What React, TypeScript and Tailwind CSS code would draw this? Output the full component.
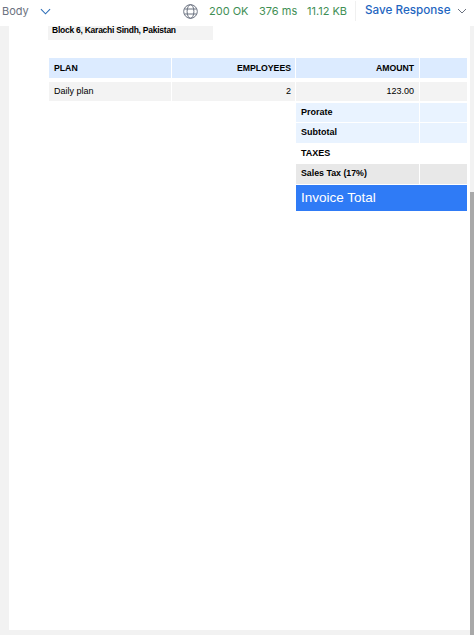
const font = "font-['Liberation_Sans',Arial,sans-serif]";

export default function App() {
  return (
    <div className="w-[474px] h-[635px] overflow-hidden bg-white flex flex-col relative">
      {/* Top bar */}
      <div className="h-[26px] shrink-0 flex items-center pb-[4px] bg-white font-['Inter',sans-serif] text-[11px] whitespace-nowrap">
        <span className="ml-[2px] w-[26px] text-[#6b7280]">Body</span>
        <svg className="ml-[12px] shrink-0" width="11" height="11" viewBox="0 0 12 12" fill="none" stroke="#2f6fb8" strokeWidth="1.2">
          <path d="M1 3.5l5 5 5-5" />
        </svg>
        <svg className="ml-[132px] shrink-0" width="15" height="15" viewBox="0 0 15 15" fill="none" stroke="#6b7280" strokeWidth="1">
          <circle cx="7.5" cy="7.5" r="6.8" />
          <ellipse cx="7.5" cy="7.5" rx="3.4" ry="6.8" />
          <path d="M1.5 5h12M1.5 10h12" />
        </svg>
        <span className="ml-[11px] w-[38px] text-[#3f8f55]">200 OK</span>
        <span className="ml-[12px] w-[37px] text-[#3f8f55]">376 ms</span>
        <span className="ml-[11px] w-[39px] text-[#3f8f55]">11.12 KB</span>
        <div className="ml-[9px] h-[20px] w-px shrink-0 bg-[#f0f0f0]" />
        <span className="ml-[9px] w-[85px] text-[11.7px] font-medium text-[#1f66c1]">Save Response</span>
        <svg className="ml-[7px] shrink-0" width="10" height="10" viewBox="0 0 10 10" fill="none" stroke="#6b7280" strokeWidth="1">
          <path d="M1 3l4 4 4-4" />
        </svg>
      </div>

      {/* Preview */}
      <div className="flex-1 bg-[#f2f2f2] pl-[9px] pr-[4px] pb-[5px] min-h-0">
        <div className={`h-full bg-white pl-[39px] pr-[3px] text-[9px] text-black ${font}`}>
          <div className="w-[165px] h-[14px] bg-[#f3f3f3] pl-[4px] text-[8.5px] tracking-[-0.25px] font-bold leading-[9px] whitespace-nowrap">
            Block 6, Karachi Sindh, Pakistan
          </div>

          <div className="mt-[18px] ml-px grid grid-cols-[122px_123px_123px_47px] gap-x-px">
            <div className="h-[20px] bg-[#dcebff] pl-[5px] pt-px text-[8.7px] font-bold flex items-center">PLAN</div>
            <div className="h-[20px] bg-[#dcebff] pr-[4px] pt-px text-[8.7px] font-bold flex items-center justify-end">EMPLOYEES</div>
            <div className="h-[20px] bg-[#dcebff] pr-[5px] pt-px text-[8.7px] font-bold flex items-center justify-end">AMOUNT</div>
            <div className="h-[20px] bg-[#dcebff]" />

            <div className="mt-[4px] h-[19px] bg-[#f3f3f3] pl-[5px] flex items-center">Daily plan</div>
            <div className="mt-[4px] h-[19px] bg-[#f3f3f3] pr-[4px] flex items-center justify-end">2</div>
            <div className="mt-[4px] h-[19px] bg-[#f3f3f3] pr-[5px] flex items-center justify-end">123.00</div>
            <div className="mt-[4px] h-[19px] bg-[#f3f3f3]" />

            <div className="col-start-3 mt-[2px] h-[19px] bg-[#e9f3ff] pl-[5px] font-bold flex items-center">Prorate</div>
            <div className="mt-[2px] h-[19px] bg-[#e9f3ff]" />

            <div className="col-start-3 mt-px h-[20px] bg-[#e9f3ff] pl-[5px] font-bold flex items-center">Subtotal</div>
            <div className="mt-px h-[20px] bg-[#e9f3ff]" />

            <div className="col-start-3 h-[21px] pl-[5px] font-bold flex items-center">TAXES</div>
            <div className="h-[21px]" />

            <div className="col-start-3 h-[20px] bg-[#e8e8e8] pl-[5px] text-[8.8px] font-bold flex items-center">Sales Tax (17%)</div>
            <div className="h-[20px] bg-[#e8e8e8]" />

            <div className="col-start-3 col-span-2 mt-px h-[26px] bg-[#2f7bf6] pl-[5px] pt-px text-[13.5px] text-white flex items-center">
              Invoice Total
            </div>
          </div>
        </div>
      </div>

      {/* Scrollbar thumb */}
      <div className="absolute right-0 top-[192px] bottom-0 w-[4px] bg-[#a9a9a9]" />
    </div>
  );
}
